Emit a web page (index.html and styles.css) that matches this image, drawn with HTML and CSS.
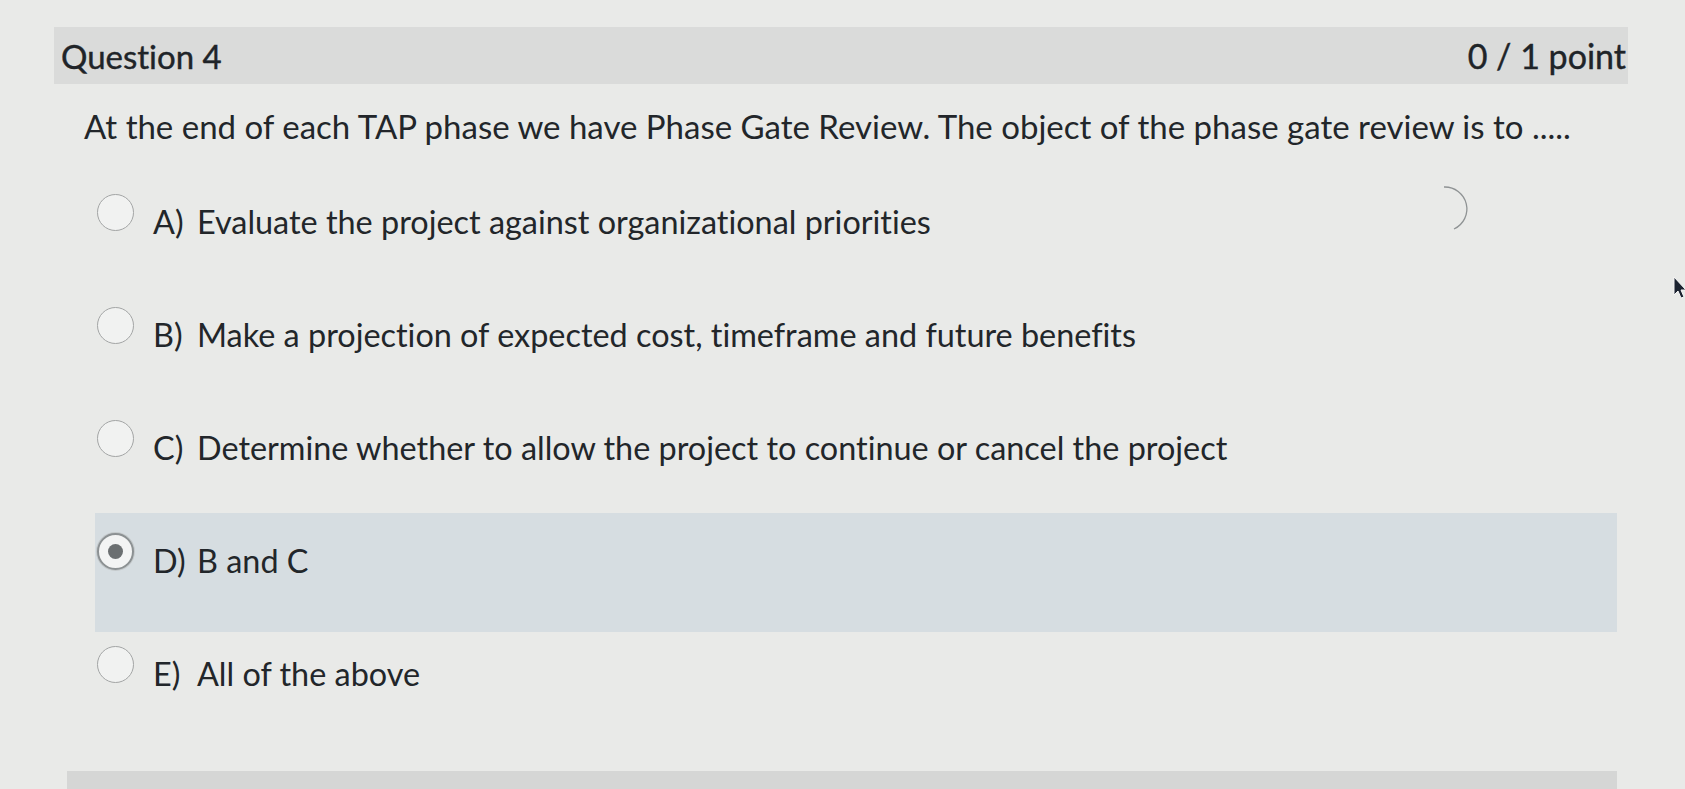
FILE: index.html
```html
<!DOCTYPE html>
<html lang="en">
<head>
<meta charset="utf-8">
<title>Question 4</title>
<link rel="stylesheet" href="styles.css">
</head>
<body>
<div class="page">
  <div class="q-header">
    <span class="q-title">Question 4</span>
    <span class="q-points">0 / 1 point</span>
  </div>
  <p class="q-text">At the end of each TAP phase we have Phase Gate Review. The object of the phase gate review is to .....</p>
  <div class="options">
    <div class="option"><span class="radio"></span><span class="letter">A)</span><span class="label">Evaluate the project against organizational priorities</span></div>
    <div class="option"><span class="radio"></span><span class="letter">B)</span><span class="label">Make a projection of expected cost, timeframe and future benefits</span></div>
    <div class="option"><span class="radio"></span><span class="letter">C)</span><span class="label">Determine whether to allow the project to continue or cancel the project</span></div>
    <div class="option selected"><span class="radio checked"></span><span class="letter">D)</span><span class="label">B and C</span></div>
    <div class="option"><span class="radio"></span><span class="letter">E)</span><span class="label">All of the above</span></div>
  </div>
  <div class="next-header"></div>
  <svg class="arc" width="40" height="50" viewBox="0 0 40 50"><path d="M4 3 A22 22 0 0 1 14 45" fill="none" stroke="#8f9394" stroke-width="1.3"/></svg>
  <svg class="cursor" width="14" height="24" viewBox="0 0 14 24"><path d="M1 1 L1 19 L5 15 L8 22 L11 21 L8 14 L13 14 Z" fill="#1b2330" stroke="#f5f5f5" stroke-width="1"/></svg>
</div>
</body>
</html>
```

FILE: styles.css
```css
html, body {
  margin: 0;
  padding: 0;
}
body {
  background: #e9eae8;
  font-family: Lato, "Open Sans", "Liberation Sans", sans-serif;
  font-variant-ligatures: none;
  color: #22262a;
  width: 1685px;
  height: 789px;
  overflow: hidden;
}
.page {
  position: relative;
  padding-top: 27px;
  height: 789px;
  box-sizing: border-box;
}
.q-header {
  margin-left: 54px;
  width: 1574px;
  height: 57px;
  background: #dadbda;
  display: flex;
  justify-content: space-between;
  align-items: center;
  padding: 0 2px 0 7px;
  box-sizing: border-box;
}
.q-title, .q-points {
  font-size: 34px;
  line-height: 40px;
  color: #202428;
  -webkit-text-stroke: 0.4px #202428;
}
.q-title {
  font-size: 33px;
}
.q-text {
  margin: 23px 0 0 84px;
  font-size: 33px;
  line-height: 38px;
}
.options {
  margin: 31px 0 0 95px;
  width: 1522px;
}
.option {
  display: flex;
  align-items: flex-start;
  height: 113px;
  padding: 18px 0 0 2px;
  box-sizing: border-box;
  font-size: 32.4px;
  line-height: 38px;
}
.option.selected {
  background: #d6dde1;
  height: 119px;
  margin: -2px 0 -4px;
  padding-top: 20px;
}
.radio {
  width: 37px;
  height: 37px;
  border-radius: 50%;
  border: 1.5px solid #a3a5a5;
  background: #f1f2f1;
  box-sizing: border-box;
  flex: none;
  position: relative;
}
.radio.checked {
  background: #f3f4f4;
  border: 2px solid #8c9193;
  box-shadow: 0 0 0 1px #c4c9cb;
}
.radio.checked::after {
  content: "";
  position: absolute;
  left: 50%;
  top: 50%;
  width: 15px;
  height: 15px;
  margin: -7.5px 0 0 -7.5px;
  border-radius: 50%;
  background: #6b6f71;
}
.letter {
  margin: 9px 0 0 19px;
  width: 44px;
}
.label {
  margin-top: 9px;
}
.next-header {
  margin: 30px 0 0 67px;
  width: 1550px;
  height: 30px;
  background: #d5d6d5;
}
.arc {
  position: absolute;
  left: 1440px;
  top: 184px;
}
.cursor {
  position: absolute;
  left: 1673px;
  top: 276px;
}
```
